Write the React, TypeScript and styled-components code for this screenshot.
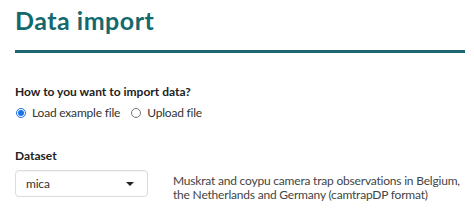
import React from "react";
import styled, { createGlobalStyle } from "styled-components";

const Global = createGlobalStyle`
  html, body { margin: 0; padding: 0; background: #fff; }
  body { font-family: Lato, "Open Sans", sans-serif; color: #333; }
`;

const Page = styled.main`
  padding: 0 9px 0 15px;
  display: flex;
  flex-direction: column;
`;

const Title = styled.h1`
  margin: 0;
  padding: 5px 0 15px;
  font-size: 25px;
  line-height: 30px;
  letter-spacing: 0.5px;
  font-weight: 700;
  color: #13696e;
  border-bottom: 3px solid #1d6571;
`;

const Field = styled.section<{ $top: number }>`
  margin-top: ${(p) => p.$top}px;
  display: flex;
  flex-direction: column;
`;

const Label = styled.div`
  font-size: 12px;
  font-weight: 700;
  line-height: 16px;
  color: #222;
`;

const RadioRow = styled.div`
  display: flex;
  gap: 11px;
  margin-top: 5px;
  margin-left: 1px;
`;

const RadioOption = styled.label`
  display: flex;
  align-items: center;
  gap: 6px;
  font-size: 12px;
  letter-spacing: -0.2px;
  line-height: 16px;
  color: #333;
`;

const RadioDot = styled.span<{ $checked?: boolean }>`
  width: 10px;
  height: 10px;
  border-radius: 50%;
  box-sizing: border-box;
  border: 1px solid ${(p) => (p.$checked ? "#1a73e8" : "#767676")};
  display: flex;
  align-items: center;
  justify-content: center;
  &::after {
    content: "";
    width: 6px;
    height: 6px;
    border-radius: 50%;
    background: ${(p) => (p.$checked ? "#1a73e8" : "transparent")};
  }
`;

const Row = styled.div`
  display: flex;
  align-items: flex-start;
  margin-top: 6px;
  gap: 25px;
`;

const Select = styled.div`
  flex: none;
  width: 133px;
  height: 27px;
  box-sizing: border-box;
  border: 1px solid #dcdcdc;
  border-radius: 4px;
  box-shadow: inset 0 1px 1px rgba(0, 0, 0, 0.04);
  display: flex;
  align-items: center;
  justify-content: space-between;
  padding: 0 13px 0 10px;
  font-size: 12px;
  letter-spacing: -0.2px;
  line-height: 16px;
  color: #333;
`;

const Caret = styled.span`
  width: 0;
  height: 0;
  border-left: 4px solid transparent;
  border-right: 4px solid transparent;
  border-top: 4px solid #222;
`;

const Desc = styled.p`
  margin: 4px 0 0;
  font-size: 12px;
  letter-spacing: -0.2px;
  line-height: 14px;
  color: #444;
  white-space: nowrap;
`;

export default function App() {
  return (
    <Page>
      <Global />
      <Title>Data import</Title>
      <Field $top={31}>
        <Label>How to you want to import data?</Label>
        <RadioRow>
          <RadioOption>
            <RadioDot $checked />
            Load example file
          </RadioOption>
          <RadioOption>
            <RadioDot />
            Upload file
          </RadioOption>
        </RadioRow>
      </Field>
      <Field $top={27}>
        <Label>Dataset</Label>
        <Row>
          <Select>
            mica
            <Caret />
          </Select>
          <Desc>
            Muskrat and coypu camera trap observations in Belgium,
            <br />
            the Netherlands and Germany (camtrapDP format)
          </Desc>
        </Row>
      </Field>
    </Page>
  );
}
